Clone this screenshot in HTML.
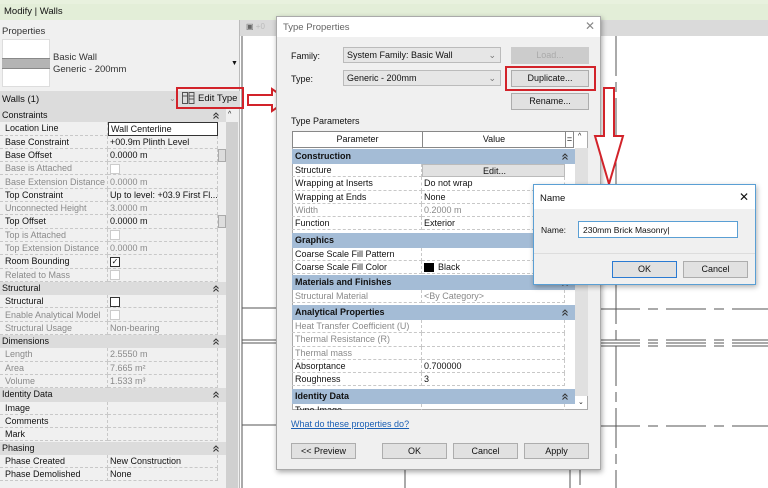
<!DOCTYPE html>
<html><head><meta charset="utf-8"><style>
*{box-sizing:border-box;margin:0;padding:0}
body{width:768px;height:488px;overflow:hidden;position:relative;background:#fff;font-family:"Liberation Sans",sans-serif;font-size:9px;color:#111}
.a{position:absolute}
.row{position:absolute;left:0;height:13.3px;line-height:13px;white-space:nowrap}
.pl .row{width:218px}
.pl .l{position:absolute;left:0;width:108px;height:13.3px;padding-left:5px;border-bottom:1px dashed #c8c8c8;border-right:1px dashed #c8c8c8}
.pl .v{position:absolute;left:108px;width:110px;height:13.3px;padding-left:2px;border-bottom:1px dashed #c8c8c8;border-right:1px dashed #c8c8c8}
.g{color:#8a8a8a}
.hd{background:#dcdcdc;padding-left:2px;font-weight:normal}
.tb .row{width:283px}
.tb .l{position:absolute;left:0;width:130px;height:13.3px;padding-left:3px;border-bottom:1px dashed #c8c8c8;border-right:1px dashed #c8c8c8}
.tb .v{position:absolute;left:130px;width:143px;height:13.3px;padding-left:2px;border-bottom:1px dashed #c8c8c8;border-right:1px dashed #c8c8c8}
.tb .hd{background:#a4bcd6;font-weight:bold;padding-left:3px;height:15px;line-height:15px}
.btn{position:absolute;background:#e1e1e1;border:1px solid #adadad;text-align:center;font-size:9px}
.cb{display:inline-block;width:10px;height:10px;border:1px solid #ccc;vertical-align:middle;background:#fff}
.dc{position:absolute;right:7px;top:3px;width:6px;height:7px}
</style></head><body>
<svg width="0" height="0" style="position:absolute"><defs><symbol id="dc" viewBox="0 0 6 7"><path d="M0.5 3.5 L3 1 L5.5 3.5 M0.5 6.5 L3 4 L5.5 6.5" fill="none" stroke="#333" stroke-width="1"/></symbol></defs></svg>
<!-- top -->
<div class="a" style="left:0;top:0;width:768px;height:4px;background:#e8f1de"></div>
<div class="a" style="left:0;top:4px;width:768px;height:16px;background:#e3eed8;padding-left:4px;line-height:16px;font-size:9.5px">Modify | Walls</div>
<div class="a" style="left:240px;top:20px;width:528px;height:16px;background:#dadada"></div>
<div class="a" style="left:246px;top:22px;font-size:8px;color:#666">▣ <span style="color:#bbb">+0</span></div>
<svg class="a" style="left:0;top:0" width="768" height="488">
<g stroke="#555" stroke-width="1">
<line x1="616" y1="36" x2="616" y2="488" stroke-dasharray="40,6,10,6"/>
<line x1="600" y1="309" x2="768" y2="309" stroke-dasharray="40,8,10,8"/>
<line x1="600" y1="340" x2="768" y2="340" stroke-dasharray="40,8,10,8"/>
<line x1="600" y1="343" x2="768" y2="343" stroke-dasharray="40,8,10,8"/>
<line x1="600" y1="346" x2="768" y2="346" stroke-dasharray="40,8,10,8"/>
<line x1="600" y1="426" x2="768" y2="426" stroke-dasharray="40,8,10,8"/>
<line x1="242" y1="308" x2="276" y2="308"/>
<line x1="242" y1="340" x2="276" y2="340"/><line x1="242" y1="343" x2="276" y2="343"/>
<line x1="242" y1="425" x2="276" y2="425"/>
<line x1="242" y1="488" x2="242" y2="36"/>
<line x1="405" y1="470" x2="405" y2="488"/><line x1="570" y1="470" x2="570" y2="488"/><line x1="580" y1="470" x2="580" y2="485"/>
</g>
</svg>
<!-- properties palette -->
<div class="a" style="left:0;top:20px;width:240px;height:468px;background:#f0f0f0;border-right:1px solid #bbb"></div>
<div class="a" style="left:2px;top:26px;font-size:9.5px;color:#333">Properties</div>
<div class="a" style="left:2px;top:39px;width:48px;height:48px;background:#fff;border:1px solid #ddd"></div>
<div class="a" style="left:2px;top:58px;width:48px;height:11px;background:#b4b4b4;border-top:1px solid #888;border-bottom:1px solid #888"></div>
<div class="a" style="left:53px;top:52px;font-size:9.5px;color:#333;line-height:12px">Basic Wall<br>Generic - 200mm</div>
<div class="a" style="left:231px;top:60px;font-size:7px">▼</div>
<div class="a" style="left:0;top:91px;width:240px;height:18px;background:#dcdcdc"></div>
<div class="a" style="left:2px;top:94px;font-size:9.5px">Walls (1)</div>
<div class="a" style="left:169px;top:94px;font-size:8px;color:#888">⌄</div>
<div class="a" style="left:176px;top:87px;width:68px;height:22px;border:2px solid #d2232a"></div>
<svg class="a" style="left:182px;top:92px" width="13" height="12"><g fill="none" stroke="#444" stroke-width="0.9"><rect x="0.5" y="0.5" width="5" height="11"/><rect x="7" y="0.5" width="5" height="11"/><line x1="0.5" y1="4" x2="5.5" y2="4"/><line x1="7" y1="4" x2="12" y2="4"/><line x1="7" y1="7" x2="12" y2="7"/></g></svg>
<div class="a" style="left:198px;top:93px;font-size:9.5px">Edit Type</div>
<svg class="a" style="left:246px;top:87px" width="46" height="26"><path d="M2 8 H26 V2 L42 13 L26 24 V18 H2 Z" fill="#fff" stroke="#d2232a" stroke-width="2"/></svg>
<div class="a" style="left:226px;top:122px;width:12px;height:366px;background:#d0d0d0"></div>
<div class="a" style="left:228px;top:111px;font-size:7px">^</div>
<div class="a" style="left:218px;top:149px;width:8px;height:13px;background:#ddd;border:1px solid #aaa"></div>
<div class="a" style="left:218px;top:215px;width:8px;height:13px;background:#ddd;border:1px solid #aaa"></div>
<div class="pl">
<div class="row hd" style="top:109px;width:226px">Constraints<svg class="dc"><use href="#dc"/></svg></div>
<div class="row" style="top:122.3px"><div class="l">Location Line</div><div class="v" style="border:1px solid #333;background:#fff">Wall Centerline</div></div>
<div class="row" style="top:135.6px"><div class="l">Base Constraint</div><div class="v">+00.9m Plinth Level</div></div>
<div class="row" style="top:148.9px"><div class="l">Base Offset</div><div class="v">0.0000 m</div></div>
<div class="row g" style="top:162.2px"><div class="l">Base is Attached</div><div class="v"><span class="cb"></span></div></div>
<div class="row g" style="top:175.5px"><div class="l">Base Extension Distance</div><div class="v">0.0000 m</div></div>
<div class="row" style="top:188.8px"><div class="l">Top Constraint</div><div class="v">Up to level: +03.9 First Fl...</div></div>
<div class="row g" style="top:202.1px"><div class="l">Unconnected Height</div><div class="v">3.0000 m</div></div>
<div class="row" style="top:215.4px"><div class="l">Top Offset</div><div class="v">0.0000 m</div></div>
<div class="row g" style="top:228.7px"><div class="l">Top is Attached</div><div class="v"><span class="cb"></span></div></div>
<div class="row g" style="top:242px"><div class="l">Top Extension Distance</div><div class="v">0.0000 m</div></div>
<div class="row" style="top:255.3px"><div class="l">Room Bounding</div><div class="v"><span class="cb" style="border-color:#333;font-size:8px;line-height:8px;text-align:center">✓</span></div></div>
<div class="row g" style="top:268.6px"><div class="l">Related to Mass</div><div class="v"><span class="cb"></span></div></div>
<div class="row hd" style="top:281.9px;width:226px">Structural<svg class="dc"><use href="#dc"/></svg></div>
<div class="row" style="top:295.2px"><div class="l">Structural</div><div class="v"><span class="cb" style="border-color:#333"></span></div></div>
<div class="row g" style="top:308.5px"><div class="l">Enable Analytical Model</div><div class="v"><span class="cb"></span></div></div>
<div class="row g" style="top:321.8px"><div class="l">Structural Usage</div><div class="v">Non-bearing</div></div>
<div class="row hd" style="top:335.1px;width:226px">Dimensions<svg class="dc"><use href="#dc"/></svg></div>
<div class="row g" style="top:348.4px"><div class="l">Length</div><div class="v">2.5550 m</div></div>
<div class="row g" style="top:361.7px"><div class="l">Area</div><div class="v">7.665 m²</div></div>
<div class="row g" style="top:375px"><div class="l">Volume</div><div class="v">1.533 m³</div></div>
<div class="row hd" style="top:388.3px;width:226px">Identity Data<svg class="dc"><use href="#dc"/></svg></div>
<div class="row" style="top:401.6px"><div class="l">Image</div><div class="v"></div></div>
<div class="row" style="top:414.9px"><div class="l">Comments</div><div class="v"></div></div>
<div class="row" style="top:428.2px"><div class="l">Mark</div><div class="v"></div></div>
<div class="row hd" style="top:441.5px;width:226px">Phasing<svg class="dc"><use href="#dc"/></svg></div>
<div class="row" style="top:454.8px"><div class="l">Phase Created</div><div class="v">New Construction</div></div>
<div class="row" style="top:468.1px"><div class="l">Phase Demolished</div><div class="v">None</div></div>
</div>
<!-- Type Properties dialog -->
<div class="a" style="left:276px;top:16px;width:325px;height:454px;background:#f0f0f0;border:1px solid #aaa;box-shadow:1px 2px 5px rgba(0,0,0,.35)"></div>
<div class="a" style="left:277px;top:17px;width:323px;height:20px;background:#fff"></div>
<div class="a" style="left:283px;top:22px;font-size:9.5px;color:#666">Type Properties</div>
<div class="a" style="left:585px;top:19px;font-size:12px;color:#888">✕</div>
<div class="a" style="left:291px;top:51px">Family:</div>
<div class="a" style="left:291px;top:74px">Type:</div>
<div class="a" style="left:343px;top:47px;width:158px;height:16px;background:#e6e6e6;border:1px solid #bbb;padding:2px 3px">System Family: Basic Wall<span style="position:absolute;right:4px;color:#777">⌄</span></div>
<div class="a" style="left:343px;top:70px;width:158px;height:16px;background:#e6e6e6;border:1px solid #bbb;padding:2px 3px">Generic - 200mm<span style="position:absolute;right:4px;color:#777">⌄</span></div>
<div class="btn" style="left:511px;top:47px;width:78px;height:17px;line-height:15px;color:#aaa;background:#ccc;border-color:#ccc">Load...</div>
<div class="btn" style="left:511px;top:70px;width:78px;height:17px;line-height:15px">Duplicate...</div>
<div class="a" style="left:505px;top:66px;width:91px;height:25px;border:2px solid #d2232a"></div>
<div class="btn" style="left:511px;top:93px;width:78px;height:17px;line-height:15px">Rename...</div>
<div class="a" style="left:291px;top:116px">Type Parameters</div>
<div class="a" style="left:292px;top:131px;width:296px;height:279px;background:#fff;border:1px solid #aaa"></div>
<div class="a" style="left:575px;top:148px;width:13px;height:248px;background:#e0e0e0"></div>
<div class="a" style="left:578px;top:133px;font-size:7px">^</div>
<div class="a" style="left:578px;top:398px;font-size:7px">⌄</div>
<div class="a" style="left:292px;top:131px;width:131px;height:17px;border:1px solid #888;text-align:center;line-height:15px">Parameter</div>
<div class="a" style="left:422px;top:131px;width:144px;height:17px;border:1px solid #888;text-align:center;line-height:15px">Value</div>
<div class="a" style="left:565px;top:131px;width:9px;height:17px;border:1px solid #888;text-align:center;line-height:15px">=</div>
<div class="tb a" style="left:292px;top:149px;width:283px;height:261px;overflow:hidden">
<div class="row hd" style="top:0">Construction<svg class="dc" style="top:4px"><use href="#dc"/></svg></div>
<div class="row" style="top:15px"><div class="l">Structure</div><div class="v" style="background:#e1e1e1;border:1px solid #bbb;text-align:center">Edit...</div></div>
<div class="row" style="top:28.3px"><div class="l">Wrapping at Inserts</div><div class="v">Do not wrap</div></div>
<div class="row" style="top:41.6px"><div class="l">Wrapping at Ends</div><div class="v">None</div></div>
<div class="row g" style="top:54.9px"><div class="l">Width</div><div class="v">0.2000 m</div></div>
<div class="row" style="top:68.2px"><div class="l">Function</div><div class="v">Exterior</div></div>
<div class="row hd" style="top:83.5px">Graphics<svg class="dc" style="top:4px"><use href="#dc"/></svg></div>
<div class="row" style="top:98.5px"><div class="l">Coarse Scale Fill Pattern</div><div class="v"></div></div>
<div class="row" style="top:111.8px"><div class="l">Coarse Scale Fill Color</div><div class="v"><span style="display:inline-block;width:10px;height:9px;background:#000;vertical-align:middle;margin-right:4px"></span>Black</div></div>
<div class="row hd" style="top:126px">Materials and Finishes<svg class="dc" style="top:4px"><use href="#dc"/></svg></div>
<div class="row g" style="top:141px"><div class="l">Structural Material</div><div class="v">&lt;By Category&gt;</div></div>
<div class="row hd" style="top:156px">Analytical Properties<svg class="dc" style="top:4px"><use href="#dc"/></svg></div>
<div class="row g" style="top:171px"><div class="l">Heat Transfer Coefficient (U)</div><div class="v"></div></div>
<div class="row g" style="top:184.3px"><div class="l">Thermal Resistance (R)</div><div class="v"></div></div>
<div class="row g" style="top:197.6px"><div class="l">Thermal mass</div><div class="v"></div></div>
<div class="row" style="top:210.9px"><div class="l">Absorptance</div><div class="v">0.700000</div></div>
<div class="row" style="top:224.2px"><div class="l">Roughness</div><div class="v">3</div></div>
<div class="row hd" style="top:239.5px">Identity Data<svg class="dc" style="top:4px"><use href="#dc"/></svg></div>
<div class="row" style="top:254.5px"><div class="l">Type Image</div><div class="v"></div></div>
</div>
<div class="a" style="left:291px;top:419px;color:#1a5fb4;text-decoration:underline">What do these properties do?</div>
<div class="btn" style="left:291px;top:443px;width:65px;height:16px;line-height:14px">&lt;&lt; Preview</div>
<div class="btn" style="left:382px;top:443px;width:65px;height:16px;line-height:14px">OK</div>
<div class="btn" style="left:453px;top:443px;width:65px;height:16px;line-height:14px">Cancel</div>
<div class="btn" style="left:524px;top:443px;width:65px;height:16px;line-height:14px">Apply</div>
<svg class="a" style="left:592px;top:86px" width="36" height="102"><path d="M12 2 H22 V50 H31 L17 98 L3 50 H12 Z" fill="#fff" stroke="#d2232a" stroke-width="2"/></svg>
<!-- Name dialog -->
<div class="a" style="left:533px;top:184px;width:223px;height:101px;background:#f0f0f0;border:1px solid #5a9fd4;box-shadow:1px 2px 5px rgba(0,0,0,.3)"></div>
<div class="a" style="left:534px;top:185px;width:221px;height:24px;background:#fff"></div>
<div class="a" style="left:540px;top:193px;font-size:9.5px">Name</div>
<div class="a" style="left:739px;top:190px;font-size:12px">✕</div>
<div class="a" style="left:541px;top:225px;font-size:8.5px">Name:</div>
<div class="a" style="left:578px;top:221px;width:160px;height:17px;background:#fff;border:1px solid #5a9fd4;padding:3px 4px;font-size:8.5px">230mm Brick Masonry|</div>
<div class="a" style="left:534px;top:253px;width:221px;height:1px;background:#ddd"></div>
<div class="btn" style="left:612px;top:261px;width:65px;height:17px;line-height:15px;border:1px solid #2a7ad2">OK</div>
<div class="btn" style="left:683px;top:261px;width:65px;height:17px;line-height:15px">Cancel</div>
</body></html>
